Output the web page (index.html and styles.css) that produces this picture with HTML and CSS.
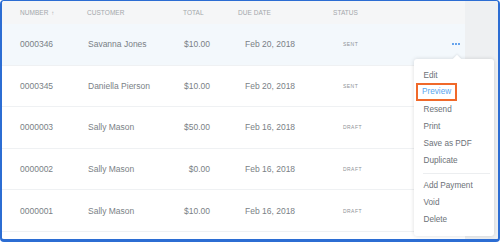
FILE: index.html
```html
<!DOCTYPE html>
<html>
<head>
<meta charset="utf-8">
<link rel="stylesheet" href="styles.css">
</head>
<body>
<div class="frame">
  <div class="table">
    <div class="head">
      <div class="h-num">NUMBER <span class="arrow">↑</span></div>
      <div class="h-cust">CUSTOMER</div>
      <div class="h-total">TOTAL</div>
      <div class="h-date">DUE DATE</div>
      <div class="h-status">STATUS</div>
      <div></div>
    </div>
    <div class="row active">
      <div class="c-num">0000346</div>
      <div class="c-cust">Savanna Jones</div>
      <div class="c-total">$10.00</div>
      <div class="c-date">Feb 20, 2018</div>
      <div class="c-status">SENT</div>
      <div class="c-act"><span class="dots"><i></i><i></i><i></i></span></div>
    </div>
    <div class="row">
      <div class="c-num">0000345</div>
      <div class="c-cust">Daniella Pierson</div>
      <div class="c-total">$10.00</div>
      <div class="c-date">Feb 20, 2018</div>
      <div class="c-status">SENT</div>
      <div></div>
    </div>
    <div class="row">
      <div class="c-num">0000003</div>
      <div class="c-cust">Sally Mason</div>
      <div class="c-total">$50.00</div>
      <div class="c-date">Feb 16, 2018</div>
      <div class="c-status">DRAFT</div>
      <div></div>
    </div>
    <div class="row">
      <div class="c-num">0000002</div>
      <div class="c-cust">Sally Mason</div>
      <div class="c-total">$0.00</div>
      <div class="c-date">Feb 16, 2018</div>
      <div class="c-status">DRAFT</div>
      <div></div>
    </div>
    <div class="row">
      <div class="c-num">0000001</div>
      <div class="c-cust">Sally Mason</div>
      <div class="c-total">$10.00</div>
      <div class="c-date">Feb 16, 2018</div>
      <div class="c-status">DRAFT</div>
      <div></div>
    </div>
  </div>
  <div class="strip"></div>
  <div class="menu">
    <div class="item">Edit</div>
    <div class="item"><span class="preview">Preview</span></div>
    <div class="item">Resend</div>
    <div class="item">Print</div>
    <div class="item">Save as PDF</div>
    <div class="item">Duplicate</div>
    <div class="divider"></div>
    <div class="item">Add Payment</div>
    <div class="item">Void</div>
    <div class="item">Delete</div>
  </div>
</div>
</body>
</html>
```

FILE: styles.css
```css
html, body {
  margin: 0;
  padding: 0;
  background: #ffffff;
}
body {
  font-family: "Liberation Sans", Arial, sans-serif;
  width: 500px;
  height: 242px;
  overflow: hidden;
}
.frame {
  position: relative;
  box-sizing: border-box;
  width: 500px;
  height: 242px;
  border: 2px solid #2c6dd3;
  border-top-width: 1px;
  border-bottom-width: 3px;
  border-radius: 4px;
  display: flex;
  overflow: hidden;
  background: #ffffff;
}
.table {
  width: 463px;
  display: flex;
  flex-direction: column;
}
.strip {
  flex: 1;
  background: #eef0f2;
}
.head, .row {
  display: grid;
  grid-template-columns: 67px 96px 55px 95px 85px 1fr;
  align-items: center;
  padding-left: 18px;
}
.head {
  height: 23px;
  background: #f5f6f7;
  font-size: 6.5px;
  color: #a3a7ab;
  letter-spacing: 0.05px;
}
.arrow {
  font-size: 6px;
  margin-left: 1px;
}
.h-date { padding-left: 0; }
.row {
  height: 40.6px;
  border-bottom: 1px solid #eff1f3;
  font-size: 8.5px;
  color: #7a7f86;
}
.row.active {
  background: #f3f8fc;
}
.c-cust { padding-left: 1px; }
.c-total {
  text-align: right;
  padding-right: 28px;
}
.c-date { padding-left: 7px; }
.c-status {
  padding-left: 10px;
  font-size: 5px;
  letter-spacing: 0.45px;
  color: #8e9297;
}
.c-act {
  display: flex;
  justify-content: flex-end;
  padding-right: 5px;
}
.dots {
  display: flex;
  gap: 1.3px;
}
.dots i {
  display: block;
  width: 1.8px;
  height: 1.8px;
  border-radius: 50%;
  background: #3d8be8;
}
.menu {
  position: absolute;
  left: 412px;
  top: 58px;
  width: 80px;
  box-sizing: border-box;
  padding: 7.5px 0 7.5px 0;
  background: #ffffff;
  border-radius: 3px;
  box-shadow: 0 0 4px rgba(0, 0, 0, 0.14);
}
.menu::before {
  content: "";
  position: absolute;
  top: -3px;
  left: 40px;
  width: 6px;
  height: 6px;
  background: #ffffff;
  transform: rotate(45deg);
  box-shadow: -1px -1px 2px rgba(0, 0, 0, 0.06);
}
.item {
  position: relative;
  height: 17px;
  display: flex;
  align-items: center;
  padding-left: 9.5px;
  font-size: 8.2px;
  color: #6c7177;
}
.preview {
  display: block;
  height: 14px;
  line-height: 14px;
  margin-left: -7.5px;
  padding: 0 4px 0 4px;
  border: 2px solid #f0692a;
  color: #58a6ef;
}
.divider {
  height: 1px;
  background: #eceef0;
  margin: 4px 4px 3.7px 9px;
}
```
